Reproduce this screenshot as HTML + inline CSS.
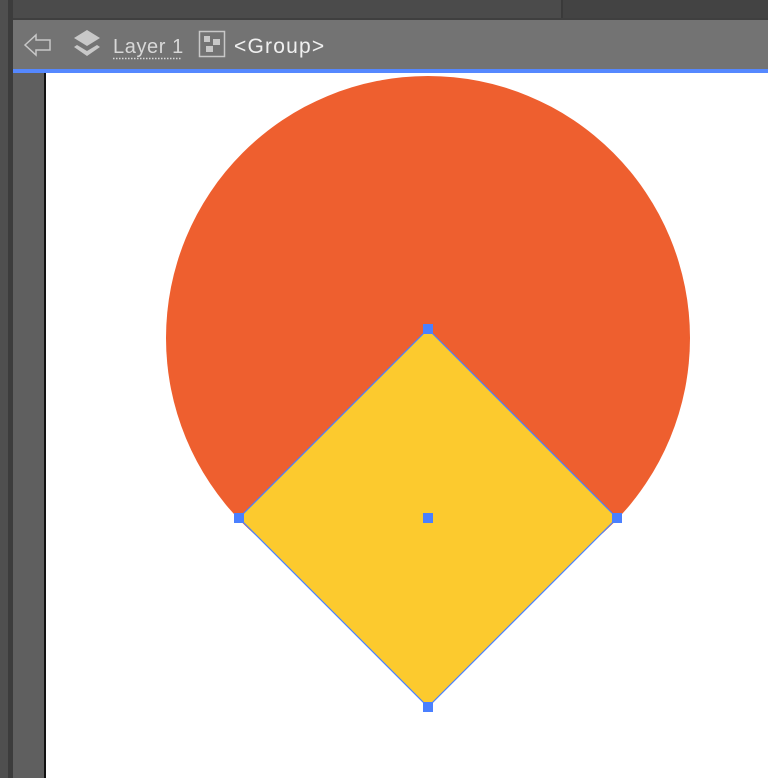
<!DOCTYPE html>
<html><head><meta charset="utf-8"><style>
html,body{margin:0;padding:0;width:768px;height:778px;overflow:hidden;background:#fff;font-family:"Liberation Sans",sans-serif}
.a{position:absolute}
</style></head><body>
<div class="a" style="left:0;top:0;width:8px;height:778px;background:#4f4f4f"></div>
<div class="a" style="left:8px;top:0;width:5px;height:778px;background:#3c3c3c"></div>
<div class="a" style="left:13px;top:0;width:548px;height:18px;background:#4b4b4b"></div>
<div class="a" style="left:561px;top:0;width:2px;height:18px;background:#3a3a3a"></div>
<div class="a" style="left:563px;top:0;width:205px;height:18px;background:#434343"></div>
<div class="a" style="left:13px;top:18px;width:755px;height:2px;background:#3f3f3f"></div>
<div class="a" style="left:13px;top:20px;width:755px;height:49px;background:#737373"></div>
<div class="a" style="left:13px;top:69px;width:755px;height:4px;background:#5588ff"></div>
<div class="a" style="left:13px;top:73px;width:31px;height:705px;background:#5f5f5f"></div>
<div class="a" style="left:44px;top:73px;width:2px;height:705px;background:#111"></div>
<svg class="a" style="left:0;top:0" width="768" height="778">
<path d="M25 45 L36 35 L36 40 L50 40 L50 50 L36 50 L36 55 Z" fill="none" stroke="#c8c8c8" stroke-width="1.5"/>
<path d="M87 30 L100 38 L87 46 L74 38 Z" fill="#c8c8c8"/>
<path d="M77 45 L87 51 L97 45 L100 47 L87 56 L74 47 Z" fill="#c8c8c8"/>
<rect x="199.5" y="31.5" width="25" height="25" fill="none" stroke="#c8c8c8" stroke-width="1.5"/>
<rect x="204" y="36" width="6" height="6" fill="#c8c8c8"/>
<rect x="213" y="39" width="7" height="6" fill="#c8c8c8"/>
<rect x="206" y="46" width="7" height="6" fill="#c8c8c8"/>
<text x="113" y="53" font-size="20" letter-spacing="0.6" fill="#d8d8d8" font-family="Liberation Sans">Layer 1</text>
<line x1="113" y1="58.5" x2="182" y2="58.5" stroke="#d8d8d8" stroke-width="1.5" stroke-dasharray="1.5,1.5"/>
<text x="234" y="53" font-size="21" letter-spacing="1.2" fill="#f0f0f0" font-family="Liberation Sans">&lt;Group&gt;</text>
<circle cx="428" cy="338" r="262" fill="#ee5f2f"/>
<path d="M428 329 L617 518 L428 707 L239 518 Z" fill="#fcca2e" stroke="#4a80ff" stroke-width="1.2"/>
<g fill="#4a80ff">
<rect x="423" y="324" width="10" height="10"/>
<rect x="234" y="513" width="10" height="10"/>
<rect x="612" y="513" width="10" height="10"/>
<rect x="423" y="702" width="10" height="10"/>
<rect x="423" y="513" width="10" height="10"/>
</g>
</svg>
</body></html>
